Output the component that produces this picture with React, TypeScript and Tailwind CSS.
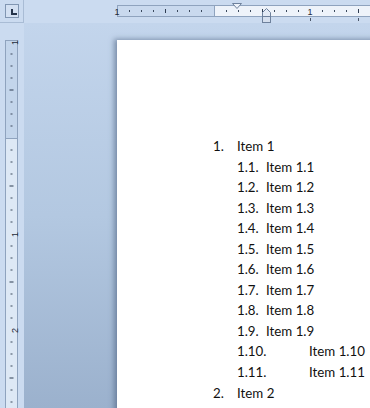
import React from "react";

const rows: { level: 1 | 2; num: string; text: string; wide?: boolean }[] = [
  { level: 1, num: "1.", text: "Item 1" },
  { level: 2, num: "1.1.", text: "Item 1.1" },
  { level: 2, num: "1.2.", text: "Item 1.2" },
  { level: 2, num: "1.3.", text: "Item 1.3" },
  { level: 2, num: "1.4.", text: "Item 1.4" },
  { level: 2, num: "1.5.", text: "Item 1.5" },
  { level: 2, num: "1.6.", text: "Item 1.6" },
  { level: 2, num: "1.7.", text: "Item 1.7" },
  { level: 2, num: "1.8.", text: "Item 1.8" },
  { level: 2, num: "1.9.", text: "Item 1.9" },
  { level: 2, num: "1.10.", text: "Item 1.10", wide: true },
  { level: 2, num: "1.11.", text: "Item 1.11", wide: true },
  { level: 1, num: "2.", text: "Item 2" },
];

function TopRuler() {
  const o = -24;
  const dots = [129, 141, 153, 177, 189, 201, 226, 238, 250, 274, 286, 298, 322, 334, 346, 370];
  const halfs = [165, 262, 358];
  const tabs = [262, 310, 358];
  return (
    <svg width={346} height={23} className="block">
      <rect x={117 + o + 0.5} y={5.5} width={400} height={11} fill="#eef3fa" stroke="#8fa3be" />
      <rect x={117 + o + 0.5} y={5.5} width={97} height={11} fill="#c9d9ee" stroke="#8fa3be" />
      {dots.map((x) => (
        <rect key={x} x={x + o} y={10} width={1} height={2} fill="#3c4a5e" />
      ))}
      {halfs.map((x) => (
        <rect key={x} x={x + o} y={9} width={1} height={4} fill="#2f3d52" />
      ))}
      {tabs.map((x) => (
        <rect key={"t" + x} x={x + o} y={18} width={1} height={3} fill="#4a5568" />
      ))}
      <text x={117 + o} y={14.5} fontSize={9} fill="#1f2a3a" textAnchor="middle" fontFamily="'Liberation Sans', sans-serif">1</text>
      <text x={310 + o} y={14.5} fontSize={9} fill="#1f2a3a" textAnchor="middle" fontFamily="'Liberation Sans', sans-serif">1</text>
      <polygon points={`${232.5 + o},3.5 ${241.5 + o},3.5 ${237 + o},8.5`} fill="#eef3fa" stroke="#6e819c" />
      <polygon
        points={`${262.5 + o},12.5 ${266.5 + o},8.5 ${270.5 + o},12.5 ${270.5 + o},16.5 ${262.5 + o},16.5`}
        fill="#e3eaf5"
        stroke="#6e819c"
      />
      <rect x={262.5 + o} y={16.5} width={8} height={6} fill="#d5dfee" stroke="#6e819c" />
    </svg>
  );
}

function LeftRuler() {
  const o = -40;
  const zero = 137.5;
  const marks: React.ReactNode[] = [];
  for (let i = -8; i <= 23; i++) {
    const y = zero + i * 12 + o;
    if (y < -2 || y > 370) continue;
    if (i % 8 === 0) {
      if (i === 0) continue;
      const label = String(Math.abs(i / 8));
      marks.push(
        <text
          key={i}
          x={0}
          y={0}
          fontSize={9}
          fill="#1f2a3a"
          textAnchor="middle"
          fontFamily="'Liberation Sans', sans-serif"
          transform={`translate(10 ${y + 1}) rotate(-90) translate(0 3)`}
        >
          {label}
        </text>
      );
    } else if (i % 4 === 0) {
      marks.push(<rect key={i} x={4.5} y={y} width={4} height={1} fill="#2f3d52" />);
    } else {
      marks.push(<rect key={i} x={5.5} y={y} width={2} height={1} fill="#3c4a5e" />);
    }
  }
  return (
    <svg width={14} height={368} className="block">
      <rect x={0.5} y={0.5} width={12} height={98} fill="#c3d5eb" stroke="#8fa3be" />
      <rect x={0.5} y={98.5} width={12} height={300} fill="#dde8f5" stroke="#8fa3be" />
      {marks}
    </svg>
  );
}

export default function App() {
  return (
    <div className="w-[370px] h-[408px] overflow-hidden flex flex-col bg-[#cbdbf0]">
      <div className="flex h-[23px] shrink-0 bg-[#cbdbf0]">
        <div className="w-[24px] h-[23px] border-r border-b border-[#a9bcd5] flex items-start pl-[5px] pt-[4px] shrink-0">
          <div className="w-[14px] h-[14px] border border-[#8196b2] bg-[#d3e0f2] flex items-end justify-start pl-[5px] pb-[2px]">
            <svg width={7} height={6} className="block">
              <rect x={0} y={0} width={2} height={6} fill="#25344b" />
              <rect x={0} y={4} width={6} height={2} fill="#25344b" />
            </svg>
          </div>
        </div>
        <TopRuler />
      </div>
      <div className="flex flex-1 min-h-0">
        <div className="w-[24px] shrink-0 bg-[#cbdbf0] pl-[5px] pt-[17px]">
          <LeftRuler />
        </div>
        <div className="flex-1 min-w-0 bg-gradient-to-b from-[#c3d5ec] via-[#b3c8e1] to-[#9bb1cd] pl-[93px] pt-[17px] overflow-hidden">
          <div
            className="bg-white h-[420px] w-[300px] shadow-[-3px_-1px_5px_rgba(70,90,120,0.55)] pt-[96px] pl-[96px]"
            style={{ fontFamily: "Lato, 'Open Sans', sans-serif" }}
          >
            <div className="flex flex-col text-[13.3px] leading-[20.55px] text-[#111111]">
              {rows.map((r) => (
                <div key={r.num} className={`flex ${r.level === 2 ? "pl-[24px]" : ""}`}>
                  <span
                    className={`shrink-0 ${
                      r.level === 1 ? "w-[24px]" : r.wide ? "w-[72px]" : "w-[29px]"
                    }`}
                  >
                    {r.num}
                  </span>
                  <span className="whitespace-nowrap">{r.text}</span>
                </div>
              ))}
            </div>
          </div>
        </div>
      </div>
    </div>
  );
}
